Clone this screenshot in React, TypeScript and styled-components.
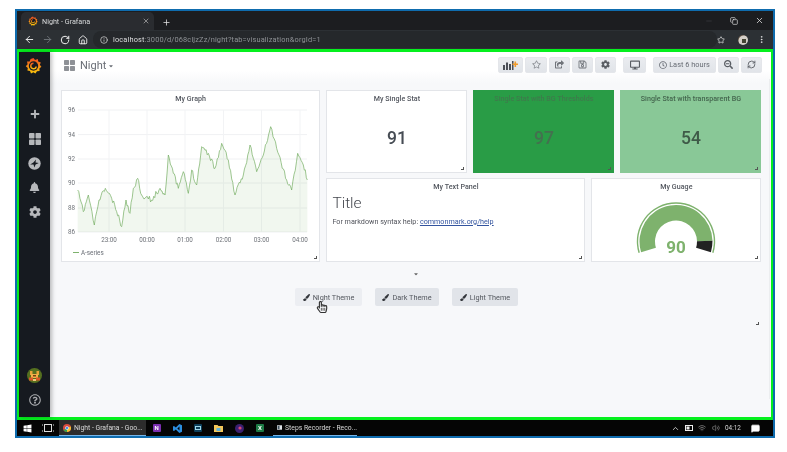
import React from "react";
import styled, { createGlobalStyle } from "styled-components";
import { ArrowLeft, ArrowRight, RotateCw, Home, Info, Star, MoreVertical, X, Plus, Minus, Copy, ChevronUp, Volume2, Wifi, MessageSquare, RefreshCw } from "lucide-react";
import { FaBell, FaCog, FaPaintBrush, FaRegHandPointer, FaRegStar, FaRegSave, FaDesktop, FaRegClock, FaSearchMinus, FaShareSquare, FaWindows, FaPlus, FaRegQuestionCircle, FaCaretDown } from "react-icons/fa";

const Global = createGlobalStyle`
  html, body { margin: 0; padding: 0; background: #fff; overflow: hidden; }
  body { font-family: Roboto, "Liberation Sans", sans-serif; }
  * { box-sizing: border-box; }
`;

const Frame = styled.div`
  width: 787px; height: 452px; padding: 9px 12px 14px 15px;
`;
const Win = styled.div`
  width: 760px; height: 429px; border: 2px solid #0f6cae;
  display: flex; flex-direction: column; background: #000; filter: blur(0.35px);
`;
const TabStrip = styled.div`
  height: 19px; background: #1c1d20; display: flex; align-items: flex-end; padding-left: 4px; color: #e8e8e8; flex: none;
`;
const Tab = styled.div`
  width: 133px; height: 18px; background: #2a2c30; border-radius: 5px 5px 0 0; display: flex; align-items: center;
  padding: 0 4px 0 7px; font-size: 7.2px; color: #d8d9da;
`;
const TabTitle = styled.span` margin-left: 4px; flex: 1; `;
const NewTab = styled.div` margin: 0 0 3px 8px; display: flex; `;
const WinControls = styled.div`
  margin-left: auto; height: 19px; display: flex; align-items: center; gap: 17px; padding-right: 9px;
`;
const Toolbar = styled.div`
  height: 19px; background: #2c3034; display: flex; align-items: center; padding-left: 3px; color: #eee; flex: none;
`;
const NavIcon = styled.div<{ $w: number }>`
  width: ${p => p.$w}px; display: flex; justify-content: center;
`;
const UrlBar = styled.div`
  width: 624px; margin-left: 2px; height: 17px; background: #25282b; border-radius: 8px; display: flex; align-items: center;
  padding-left: 7px; font-size: 7.4px; color: #8e9195; letter-spacing: .15px;
`;
const UrlHost = styled.b` color: #dcddde; font-weight: 400; margin-left: 5px; `;
const ToolbarEnd = styled.div` display: flex; align-items: center; gap: 13px; `;
const MenuDots = styled.div` display: flex; margin-left: -4px; `;
const ProfileDot = styled.div`
  width: 10px; height: 10px; border-radius: 50%; background: radial-gradient(circle at 60% 60%, #443 0 25%, #d4cfc8 30% 60%, #6a5a4a 70%);
`;

const Page = styled.div`
  flex: 1; min-height: 0; border-style: solid; border-color: #05f01e; border-width: 3px 2px 3px 2px; display: flex; background: #f7f8fa;
`;
const Sidebar = styled.div`
  width: 31px; flex: none; background: #161a20; display: flex; flex-direction: column; align-items: center; color: #b6b8bb;
  box-shadow: 2px 0 4px rgba(0,0,0,.25); z-index: 1; padding-top: 5px; position: relative;
`;
const LogoBox = styled.div` height: 45px; margin-left: -3px; `;
const SideItem = styled.div`
  height: 24.5px; display: flex; align-items: center; justify-content: center; width: 100%;
`;
const SideBottom = styled.div`
  margin-top: auto; display: flex; flex-direction: column; align-items: center; gap: 11px; padding-bottom: 11px;
`;
const Main = styled.div` flex: 1; min-width: 0; display: flex; flex-direction: column; `;
const TopBar = styled.div`
  height: 31px; flex: none; display: flex; align-items: flex-start; padding: 4.5px 9px 0 14px; background: linear-gradient(#fff 60%, #f7f8fa);
`;
const DashName = styled.div`
  display: flex; align-items: center; gap: 5px; font-size: 11px; color: #6a6e76; height: 17px; flex: none;
`;
const Tools = styled.div` margin-left: auto; display: flex; gap: 2px; `;
const ToolBtn = styled.button<{ $w: number; $gapLeft?: number }>`
  width: ${p => p.$w}px; height: 16.5px; margin-left: ${p => p.$gapLeft || 0}px; background: linear-gradient(#eaecf0, #e1e4e9); border: 1px solid #e4e6ea; border-radius: 2px;
  display: flex; align-items: center; justify-content: center; gap: 2px; padding: 0; color: #686c74; font: 400 7.4px Roboto, sans-serif;
`;
const Dashboard = styled.div`
  padding: 7px 10px 0 11px; display: flex; flex-direction: column; gap: 5px; position: relative; flex: 1;
`;
const TopSection = styled.div` display: flex; gap: 6px; height: 172px; `;
const RightCol = styled.div` width: 435px; display: flex; flex-direction: column; gap: 5px; `;
const PanelRow = styled.div<{ $h: number }>` display: flex; gap: 6px; height: ${p => p.$h}px; `;
const Panel = styled.div<{ $w: number; $bg?: string; $title?: string }>`
  width: ${p => p.$w}px; background: ${p => p.$bg || "#fff"}; border: 1px solid ${p => p.$bg ? "transparent" : "#e3e5e9"};
  position: relative; display: flex; flex-direction: column; color: ${p => p.$title || "#52565e"};
  overflow: hidden; flex: none;
`;
const PanelTitle = styled.div`
  text-align: center; font-size: 7.1px; font-weight: 500; padding-top: 3px; height: 16px; line-height: 9px; flex: none; letter-spacing: .05px;
`;
const Corner = styled.span`
  position: absolute; right: 2px; bottom: 2px; width: 3px; height: 3px; border-right: 1px solid #555; border-bottom: 1px solid #555;
`;
const StatValue = styled.div<{ $c?: string }>`
  flex: 1; display: flex; align-items: center; justify-content: center; font-size: 17.5px; font-weight: 500; color: ${p => p.$c || "#464c54"}; padding-bottom: 3px;
`;
const Legend = styled.div`
  display: flex; align-items: center; gap: 2px; padding-left: 11px; font-size: 6.3px; color: #6a6e76; height: 15px;
`;
const LegendLine = styled.span` width: 6px; height: 1.5px; background: #7eb26d; `;
const MdBody = styled.div` padding: 0 5px; color: #52545c; margin-top: -2px; `;
const MdTitle = styled.div` font-size: 15.5px; font-weight: 300; line-height: 20px; margin-bottom: 2.5px; color: #44474e; `;
const MdText = styled.div` font-size: 7.2px; line-height: 11px; `;
const MdLink = styled.a` color: #33549f; text-decoration: underline; `;
const GaugeWrap = styled.div` display: flex; justify-content: center; margin-top: 7px; `;
const ThemePanel = styled.div`
  height: 60px; position: relative; display: flex; flex-direction: column;
`;
const Caret = styled.div` height: 21px; padding: 0 0 7px 352px; color: #666; display: flex; align-items: center; flex: none; `;
const ThemeRow = styled.div` display: flex; gap: 13px; padding-left: 234px; `;
const ThemeBtn = styled.button<{ $w: number; $hot?: boolean }>`
  width: ${p => p.$w}px; height: 18px; border: none; border-radius: 2px; background: ${p => p.$hot ? "#eceef2" : "#e1e4e9"};
  display: flex; align-items: center; justify-content: center; gap: 3px; padding: 0; color: #54585f; font: 400 7.3px Roboto, sans-serif;
`;
const Pointer = styled.div` position: absolute; left: 255px; top: 34px; color: #333; display: flex; `;
const ScrollLine = styled.div`
  position: absolute; right: 1px; top: -4px; bottom: 18px; width: 1px; background: #eceef0;
`;

const Taskbar = styled.div`
  height: 16px; flex: none; background: #050505; display: flex; align-items: center; color: #d8d8d8; font-size: 6.8px;
`;
const TaskIcon = styled.div<{ $w: number }>` width: ${p => p.$w}px; display: flex; justify-content: center; align-items: center; height: 100%; flex: none; `;
const TaskItem = styled.div<{ $w: number; $active?: boolean }>`
  width: ${p => p.$w}px; height: 100%; display: flex; align-items: center; gap: 3px; padding-left: 4px; flex: none;
  background: ${p => p.$active ? "#2c2c2c" : "transparent"}; border-bottom: 1px solid #77b5e8; white-space: nowrap; overflow: hidden;
`;
const Tile = styled.div<{ $c: string }>`
  width: 8px; height: 8px; background: ${p => p.$c}; color: #fff; font-size: 6px; font-weight: 700; display: flex; align-items: center; justify-content: center; border-radius: 1px; line-height: 1;
`;
const Tray = styled.div` margin-left: auto; display: flex; align-items: center; height: 100%; padding-right: 7px; `;
const Clock = styled.div` width: 22px; text-align: center; font-size: 6.4px; `;

const Logo = ({ s = 17 }: { s?: number }) => (
  <svg width={s} height={s * 18 / 17} viewBox="0 0 17 18">
    <defs>
      <linearGradient id="gr" x1="0" y1="1" x2="0" y2="0">
        <stop offset="0" stopColor="#fbca0a" /><stop offset="1" stopColor="#ef4b23" />
      </linearGradient>
    </defs>
    <path d="M8.5 1 L10 3 L12.8 2 L13.2 4.6 L15.8 5.4 L14.8 7.8 L16.4 9.8 L14.4 11.4 L14.6 14 L12 14.2 L10.4 16.6 L8.4 15.2 L6 16.4 L5 14 L2.4 13.6 L2.8 11 L.8 9.2 L2.6 7.2 L2 4.6 L4.6 4.4 L5.6 2 Z" fill="url(#gr)" />
    <circle cx="8.5" cy="9" r="4.7" fill="#161a20" />
    <path d="M12 9.5 A3.5 3.5 0 1 1 8.5 5.5 L8.5 7 A2 2 0 1 0 10.4 9.5 Z" fill="url(#gr)" />
  </svg>
);
const DashGrid = ({ s, c }: { s: number; c: string }) => (
  <svg width={s} height={s} viewBox="0 0 12 12" fill={c}>
    <rect x="0" y="0" width="5.5" height="5.5" rx=".8" /><rect x="6.5" y="0" width="5.5" height="5.5" rx=".8" />
    <rect x="0" y="6.5" width="5.5" height="5.5" rx=".8" /><rect x="6.5" y="6.5" width="5.5" height="5.5" rx=".8" />
  </svg>
);
const CompassIcon = () => (
  <svg width="13" height="13" viewBox="0 0 13 13">
    <circle cx="6.5" cy="6.5" r="6.2" fill="#b6b8bb" />
    <path d="M8 2.4 L7.5 5.5 L10.8 6 L7.6 7.4 L6.4 10.6 L5.5 7.6 L2.2 7.4 L5.4 5.6 Z" fill="#161a20" />
  </svg>
);
const Avatar = () => (
  <svg width="15" height="15" viewBox="0 0 15 15">
    <circle cx="7.5" cy="7.5" r="7.5" fill="#55701f" />
    <rect x="3" y="3" width="2.5" height="4" fill="#e8a33a" /><rect x="9.5" y="3" width="2.5" height="4" fill="#e8a33a" />
    <rect x="4" y="6" width="7" height="4" fill="#f0b24a" /><rect x="6" y="7" width="3" height="1.5" fill="#7a3a14" />
    <rect x="2" y="9.5" width="4" height="3" fill="#d9572a" /><rect x="9" y="9.5" width="4" height="3" fill="#d9572a" />
    <rect x="6" y="11" width="3" height="2" fill="#f0c77a" />
  </svg>
);
const ChartAdd = () => (
  <svg width="15" height="10" viewBox="0 0 15 10">
    <g fill="#4a4e56"><rect x="0" y="5" width="2" height="5" /><rect x="3" y="2.5" width="2" height="7.5" /><rect x="6" y="4" width="2" height="6" /></g>
    <rect x="9" y="1" width="1.5" height="9" fill="#4a4e56" />
    <path d="M11.5 1.5h1.6v2h2v1.6h-2v2h-1.6v-2h-2v-1.6h2z" fill="#f09a2a" />
  </svg>
);
const ChromeIcon = () => (
  <svg width="8" height="8" viewBox="0 0 8 8">
    <circle cx="4" cy="4" r="4" fill="#d94b3d" />
    <path d="M4 4 L.5 6 A4 4 0 0 0 4 8 Z" fill="#2da44e" /><path d="M4 4 L7.8 2.6 A4 4 0 0 1 4 8 Z" fill="#f2c230" />
    <circle cx="4" cy="4" r="1.8" fill="#fff" /><circle cx="4" cy="4" r="1.3" fill="#4a8df0" />
  </svg>
);
const FolderIcon = () => (
  <svg width="9" height="8" viewBox="0 0 9 8">
    <path d="M0 1h3.5l1 1H9v6H0z" fill="#f3c75a" /><rect x="2.5" y="4" width="4" height="3" fill="#5fb2d9" />
  </svg>
);
const StepsIcon = () => (
  <svg width="8" height="7" viewBox="0 0 8 7"><rect width="8" height="7" fill="#dfe3e8" /><rect x="1" y="1" width="3" height="5" fill="#40525f" /></svg>
);
const Battery = () => (
  <svg width="8" height="6" viewBox="0 0 8 6"><rect x=".5" y=".5" width="7" height="5" fill="none" stroke="#eee" /><rect x="1.5" y="1.5" width="3" height="3" fill="#eee" /></svg>
);
const VsCode = () => (
  <svg width="9" height="9" viewBox="0 0 9 9">
    <path d="M6.4 0 L9 1.2 V7.8 L6.4 9 L2.8 5.6 L1 7 L0 6.4 V2.6 L1 2 L2.8 3.4 Z M6.5 2.6 L4.3 4.5 L6.5 6.4 Z" fill="#2c8fe0" fillRule="evenodd" />
  </svg>
);

const anchors: [number, number][] = [[233,315],[250,380],[265,330],[283,420],[297,345],[316,310],[335,340],[350,380],[365,425],[378,345],[390,385],[400,310],[413,280],[425,330],[455,345],[480,310],[495,330],[505,210],[520,265],[535,310],[550,260],[565,325],[575,255],[590,300],[605,185],[625,205],[645,250],[665,175],[685,225],[705,330],[730,270],[750,180],[770,260],[790,210],[812,125],[830,190],[860,285],[875,315],[893,205],[910,240],[922,285]];
// anchors are in 3x reference px, convert to svg px (origin 62,107)
const toX = (z: number) => z / 3 - 62;
const toY = (z: number) => 85 + z / 3 - 107;
const makeSeries = () => {
  let seed = 11;
  const rnd = () => { seed = (seed * 16807) % 2147483647; return seed / 2147483647; };
  const pts: string[] = [];
  for (let i = 0; i < anchors.length - 1; i++) {
    const [ax, ay] = anchors[i]; const [bx, by] = anchors[i + 1];
    const n = Math.max(2, Math.round((bx - ax) / 3 / 1.1));
    for (let j = 0; j < n; j++) {
      const t = j / n;
      const noise = j === 0 ? 0 : (rnd() - 0.5) * 5.5;
      pts.push(`${toX(ax + (bx - ax) * t).toFixed(2)},${Math.min(125, toY(ay + (by - ay) * t) + noise).toFixed(2)}`);
    }
  }
  const l = anchors[anchors.length - 1];
  pts.push(`${toX(l[0]).toFixed(2)},${toY(l[1]).toFixed(2)}`);
  return pts;
};
const series = makeSeries();
const yTicks: [string, number][] = [["96", 3], ["94", 27.6], ["92", 52], ["90", 76], ["88", 101], ["86", 125]];
const xTicks: [string, number][] = [["23:00", 47], ["00:00", 85], ["01:00", 123], ["02:00", 161.5], ["03:00", 199.5], ["04:00", 238]];

const Chart = () => (
  <svg width="257" height="138" viewBox="0 0 257 138" style={{ flex: "none" }}>
    {yTicks.map(([, y]) => <line key={y} x1="16" x2="245" y1={y} y2={y} stroke="#f0f1f3" strokeWidth="1" />)}
    {xTicks.map(([, x]) => <line key={x} x1={x} x2={x} y1="3" y2="125" stroke="#f2f3f5" strokeWidth="1" />)}
    <polygon points={`${toX(233)},125 ${series.join(" ")} ${toX(922)},125`} fill="#7eb26d" fillOpacity=".11" />
    <polyline points={series.join(" ")} fill="none" stroke="#74ad62" strokeWidth=".7" />
    {yTicks.map(([t, y]) => <text key={t} x="13" y={y + 2.3} textAnchor="end" fontSize="6.3" fill="#6e7278" fontFamily="Roboto">{t}</text>)}
    {xTicks.map(([t, x]) => <text key={t} x={x} y="134.5" textAnchor="middle" fontSize="6.3" fill="#6e7278" fontFamily="Roboto">{t}</text>)}
  </svg>
);

const polar = (r: number, deg: number, cx: number, cy: number) => {
  const a = (deg * Math.PI) / 180;
  return `${(cx + r * Math.cos(a)).toFixed(2)} ${(cy + r * Math.sin(a)).toFixed(2)}`;
};
const band = (r0: number, r1: number, a0: number, a1: number, cx: number, cy: number) => {
  const large = a1 - a0 > 180 ? 1 : 0;
  return `M${polar(r1, a0, cx, cy)} A${r1} ${r1} 0 ${large} 1 ${polar(r1, a1, cx, cy)} L${polar(r0, a1, cx, cy)} A${r0} ${r0} 0 ${large} 0 ${polar(r0, a0, cx, cy)} Z`;
};
const Gauge = () => (
  <svg width="90" height="56" viewBox="0 0 90 56">
    <path d={band(37.8, 39.2, -197, 17, 45, 39.5)} fill="#7eb26d" />
    <path d={band(21, 36.5, -197, -1, 45, 39.5)} fill="#7eb26d" />
    <path d={band(21, 36.5, -1, 17, 45, 39.5)} fill="#222" />
    <text x="45" y="50.5" textAnchor="middle" fontSize="17" fontWeight="700" fill="#7eb26d" fontFamily="Roboto">90</text>
  </svg>
);

export default function App() {
  return (
    <Frame>
      <Global />
      <Win>
        <TabStrip>
          <Tab>
            <Logo s={10} />
            <TabTitle>Night - Grafana</TabTitle>
            <X size={8} color="#b8b8b8" />
          </Tab>
          <NewTab><Plus size={9} color="#e6e6e6" /></NewTab>
          <WinControls>
            <Minus size={8} color="#3c3e42" />
            <Copy size={8} color="#e6e6e6" />
            <X size={9} color="#e6e6e6" />
          </WinControls>
        </TabStrip>
        <Toolbar>
          <NavIcon $w={18}><ArrowLeft size={11} color="#f0f0f0" /></NavIcon>
          <NavIcon $w={18}><ArrowRight size={11} color="#70747a" /></NavIcon>
          <NavIcon $w={18}><RotateCw size={10} color="#f0f0f0" strokeWidth={2.4} /></NavIcon>
          <NavIcon $w={17}><Home size={10} color="#f0f0f0" strokeWidth={2.2} /></NavIcon>
          <UrlBar>
            <Info size={8} color="#e0e0e0" />
            <UrlHost>localhost</UrlHost>:3000/d/068cljzZz/night?tab=visualization&amp;orgId=1
          </UrlBar>
          <ToolbarEnd>
            <Star size={8} color="#eee" />
            <ProfileDot />
            <MenuDots><MoreVertical size={9} color="#eee" /></MenuDots>
          </ToolbarEnd>
        </Toolbar>
        <Page>
          <Sidebar>
            <LogoBox><Logo /></LogoBox>
            <SideItem><FaPlus size={10} /></SideItem>
            <SideItem><DashGrid s={12} c="#b6b8bb" /></SideItem>
            <SideItem><CompassIcon /></SideItem>
            <SideItem><FaBell size={11} /></SideItem>
            <SideItem><FaCog size={12} /></SideItem>
            <SideBottom>
              <Avatar />
              <FaRegQuestionCircle size={12} color="#a8aaad" />
            </SideBottom>
          </Sidebar>
          <Main>
            <TopBar>
              <DashName>
                <DashGrid s={11} c="#8e9196" />
                Night
                <FaCaretDown size={6} style={{ marginLeft: -3, marginTop: 2 }} />
              </DashName>
              <Tools>
                <ToolBtn $w={25}><ChartAdd /></ToolBtn>
                <ToolBtn $w={22}><FaRegStar size={9} color="#8a8e94" /></ToolBtn>
                <ToolBtn $w={21}><FaShareSquare size={9} color="#70747a" /></ToolBtn>
                <ToolBtn $w={21}><FaRegSave size={9} color="#70747a" /></ToolBtn>
                <ToolBtn $w={21}><FaCog size={9} color="#5a5e64" /></ToolBtn>
                <ToolBtn $w={23} $gapLeft={5}><FaDesktop size={10} color="#5a5e64" /></ToolBtn>
                <ToolBtn $w={63} $gapLeft={5}><FaRegClock size={8} /> Last 6 hours</ToolBtn>
                <ToolBtn $w={21}><FaSearchMinus size={9} color="#5a5e64" /></ToolBtn>
                <ToolBtn $w={21}><RefreshCw size={9} color="#5a5e64" strokeWidth={2.4} /></ToolBtn>
              </Tools>
            </TopBar>
            <Dashboard>
              <ScrollLine />
              <TopSection>
                <Panel $w={259.4}>
                  <PanelTitle>My Graph</PanelTitle>
                  <Chart />
                  <Legend><LegendLine /> A-series</Legend>
                  <Corner />
                </Panel>
                <RightCol>
                  <PanelRow $h={83}>
                    <Panel $w={141}>
                      <PanelTitle>My Single Stat</PanelTitle>
                      <StatValue>91</StatValue>
                      <Corner />
                    </Panel>
                    <Panel $w={141} $bg="#299c46" $title="#3f7a4c">
                      <PanelTitle>Single Stat with BG Thresholds</PanelTitle>
                      <StatValue $c="#44704f">97</StatValue>
                      <Corner />
                    </Panel>
                    <Panel $w={141} $bg="#89c897" $title="#44664e">
                      <PanelTitle>Single Stat with transparent BG</PanelTitle>
                      <StatValue $c="#3f5a48">54</StatValue>
                      <Corner />
                    </Panel>
                  </PanelRow>
                  <PanelRow $h={84}>
                    <Panel $w={259}>
                      <PanelTitle>My Text Panel</PanelTitle>
                      <MdBody>
                        <MdTitle>Title</MdTitle>
                        <MdText>For markdown syntax help: <MdLink>commonmark.org/help</MdLink></MdText>
                      </MdBody>
                      <Corner />
                    </Panel>
                    <Panel $w={170}>
                      <PanelTitle>My Guage</PanelTitle>
                      <GaugeWrap><Gauge /></GaugeWrap>
                      <Corner />
                    </Panel>
                  </PanelRow>
                </RightCol>
              </TopSection>
              <ThemePanel>
                <Caret><FaCaretDown size={6} /></Caret>
                <ThemeRow>
                  <ThemeBtn $w={67} $hot><FaPaintBrush size={7} color="#33363b" /> Night Theme</ThemeBtn>
                  <ThemeBtn $w={64}><FaPaintBrush size={7} color="#33363b" /> Dark Theme</ThemeBtn>
                  <ThemeBtn $w={66}><FaPaintBrush size={7} color="#33363b" /> Light Theme</ThemeBtn>
                </ThemeRow>
                <Pointer><FaRegHandPointer size={12} /></Pointer>
                <Corner />
              </ThemePanel>
            </Dashboard>
          </Main>
        </Page>
        <Taskbar>
          <TaskIcon $w={20}><FaWindows size={9} color="#fff" /></TaskIcon>
          <TaskIcon $w={22}><svg width="12" height="8" viewBox="0 0 12 8" fill="none" stroke="#ddd"><rect x="2.5" y=".5" width="7" height="7" /><path d="M0 1h1M0 7h1M11 1h1M11 7h1" /></svg></TaskIcon>
          <TaskItem $w={87} $active><ChromeIcon /> Night - Grafana - Goo...</TaskItem>
          <TaskIcon $w={21}><Tile $c="#7b2fb0">N</Tile></TaskIcon>
          <TaskIcon $w={21}><VsCode /></TaskIcon>
          <TaskIcon $w={20}><Tile $c="#0d3f5a"><svg width="6" height="4" viewBox="0 0 6 4"><rect x=".5" y=".5" width="5" height="3" fill="none" stroke="#9fd6e8" /></svg></Tile></TaskIcon>
          <TaskIcon $w={21}><FolderIcon /></TaskIcon>
          <TaskIcon $w={21}><svg width="9" height="9" viewBox="0 0 9 9"><circle cx="4.5" cy="4.5" r="4.5" fill="#3b2070" /><circle cx="5" cy="4" r="1.6" fill="#d8457a" /></svg></TaskIcon>
          <TaskIcon $w={20}><Tile $c="#1d7a45">X</Tile></TaskIcon>
          <TaskIcon $w={3} />
          <TaskItem $w={84}><StepsIcon /> Steps Recorder - Reco...</TaskItem>
          <Tray>
            <TaskIcon $w={14}><ChevronUp size={9} color="#eee" /></TaskIcon>
            <TaskIcon $w={13}><Battery /></TaskIcon>
            <TaskIcon $w={14}><Wifi size={8} color="#999" /></TaskIcon>
            <TaskIcon $w={13}><Volume2 size={8} color="#888" /></TaskIcon>
            <Clock>04:12</Clock>
            <TaskIcon $w={22}><MessageSquare size={9} color="#fff" fill="#fff" /></TaskIcon>
          </Tray>
        </Taskbar>
      </Win>
    </Frame>
  );
}
